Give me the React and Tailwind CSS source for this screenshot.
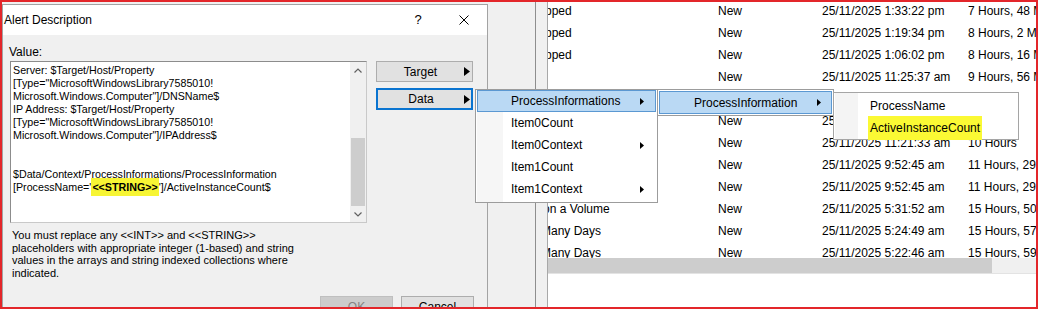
// App.jsx
// Alert Description dialog over an alert list, with a cascading data menu

import React from 'react';

const rows = [
    { name: 'Stopped', nameCls: '-ml-[21px]', date: '25/11/2025 1:33:22 pm', age: '7 Hours, 48 Minutes' },
    { name: 'Stopped', nameCls: '-ml-[21px]', date: '25/11/2025 1:19:34 pm', age: '8 Hours, 2 Minutes' },
    { name: 'Stopped', nameCls: '-ml-[21px]', date: '25/11/2025 1:06:02 pm', age: '8 Hours, 16 Minutes' },
    { name: '', nameCls: '', date: '25/11/2025 11:25:37 am', age: '9 Hours, 56 Minutes' },
    { name: '', nameCls: '', date: '25/11/2025 11:24:10 am', age: '10 Hours' },
    { name: '', nameCls: '', date: '25/11/2025 11:22:50 am', age: '10 Hours' },
    { name: '', nameCls: '', date: '25/11/2025 11:21:33 am', age: '10 Hours' },
    { name: '', nameCls: '', date: '25/11/2025 9:52:45 am', age: '11 Hours, 29 Minutes' },
    { name: '', nameCls: '', date: '25/11/2025 9:52:45 am', age: '11 Hours, 29 Minutes' },
    { name: 'on a Volume', nameCls: '-ml-[5px]', date: '25/11/2025 5:31:52 am', age: '15 Hours, 50 Minutes' },
    { name: 'Many Days', nameCls: '-ml-[7px]', date: '25/11/2025 5:24:49 am', age: '15 Hours, 57 Minutes' },
    { name: 'Many Days', nameCls: '-ml-[7px]', date: '25/11/2025 5:22:46 am', age: '15 Hours, 59 Minutes' },
];

const dataItems = [
    { label: 'ProcessInformations', sub: true, active: true },
    { label: 'Item0Count' },
    { label: 'Item0Context', sub: true },
    { label: 'Item1Count' },
    { label: 'Item1Context', sub: true },
];

const BigArrow = () => (
    <svg width="6" height="9" viewBox="0 0 6 9" className="shrink-0">
        <path d="M0 0L6 4.5L0 9Z" fill="#000" />
    </svg>
);

const SmallArrow = () => (
    <svg width="4" height="7" viewBox="0 0 4 7" className="shrink-0">
        <path d="M0 0L4 3.5L0 7Z" fill="#000" />
    </svg>
);

const Chevron = ({ up }) => (
    <svg width="8" height="5" viewBox="0 0 8 5">
        <polyline
            points={up ? '0.5,4.5 4,1 7.5,4.5' : '0.5,0.5 4,4 7.5,0.5'}
            fill="none"
            stroke="#606060"
            strokeWidth="1.2"
        />
    </svg>
);

const App = () => {
    return (
        <div className="relative w-[1038px] h-[309px] overflow-hidden border-2 border-[#e3262a] bg-[#f0f0f0] flex items-start font-['Liberation_Sans',Arial,sans-serif] text-[12px] text-black">
            {/* Dialog */}
            <div className="mt-[2px] w-[486px] shrink-0 border border-[#a3a3a3] bg-[#f0f0f0] flex flex-col">
                <div className="h-[30px] shrink-0 bg-white flex items-center pl-[1px]">
                    <span className="flex-1">Alert Description</span>
                    <span className="w-[20px] text-center text-[13px]">?</span>
                    <svg width="10" height="10" viewBox="0 0 10 10" className="ml-[31px] mr-[18px]">
                        <path d="M0.5 0.5L9.5 9.5M9.5 0.5L0.5 9.5" stroke="#000" strokeWidth="1" />
                    </svg>
                </div>

                <div className="shrink-0 flex pl-[6px] pt-[10px]">
                    <div className="w-[358px]">
                        <div className="h-[16px] leading-[14px]">Value:</div>
                        <div className="ml-[1px] w-[357px] h-[162px] border border-[#8c8c8c] border-b-[#c9c9c9] border-r-[#c9c9c9] bg-white flex">
                            <div className="flex-1 pl-[2px] pt-[2px] text-[10.7px] leading-[13px] whitespace-pre overflow-hidden">
                                <div>Server: $Target/Host/Property</div>
                                <div>[Type="MicrosoftWindowsLibrary7585010!</div>
                                <div>Microsoft.Windows.Computer"]/DNSName$</div>
                                <div>IP Address: $Target/Host/Property</div>
                                <div>[Type="MicrosoftWindowsLibrary7585010!</div>
                                <div>Microsoft.Windows.Computer"]/IPAddress$</div>
                                <div>&nbsp;</div>
                                <div>&nbsp;</div>
                                <div>$Data/Context/ProcessInformations/ProcessInformation</div>
                                <div>
                                    [ProcessName='<span className="bg-[#f7f534] py-[3px] px-[1px] font-bold">&lt;&lt;STRING&gt;&gt;</span>']/ActiveInstanceCount$
                                </div>
                            </div>
                            <div className="w-[16px] bg-[#f0f0f0] flex flex-col">
                                <div className="h-[17px] flex items-center justify-center">
                                    <Chevron up />
                                </div>
                                <div className="flex-1 flex flex-col justify-end">
                                    <div className="h-[68px] mx-[1px] bg-[#cdcdcd]"></div>
                                </div>
                                <div className="h-[16px] flex items-center justify-center">
                                    <Chevron />
                                </div>
                            </div>
                        </div>
                        <div className="ml-[3px] mt-[6px] text-[11px] leading-[12.5px]">
                            <div>You must replace any &lt;&lt;INT&gt;&gt; and &lt;&lt;STRING&gt;&gt;</div>
                            <div>placeholders with appropriate integer (1-based) and string</div>
                            <div>values in the arrays and string indexed collections where</div>
                            <div>indicated.</div>
                        </div>
                    </div>

                    <div className="ml-[9px] mt-[16px] flex flex-col gap-[6px]">
                        <button className="w-[97px] h-[21px] border border-[#adadad] bg-[#e1e1e1] flex items-center pr-[2px]">
                            <span className="flex-1 text-center">Target</span>
                            <BigArrow />
                        </button>
                        <button className="w-[97px] h-[22px] border-2 border-[#0a74d0] bg-[#e1e1e1] flex items-center pr-[1px]">
                            <span className="flex-1 text-center">Data</span>
                            <BigArrow />
                        </button>
                    </div>
                </div>

                <div className="shrink-0 mt-[17px] flex justify-end gap-[8px] pr-[13px]">
                    <button className="w-[73px] h-[22px] border border-[#bfbfbf] bg-[#cccccc] text-[#838383]">OK</button>
                    <button className="w-[73px] h-[22px] border border-[#adadad] bg-[#e1e1e1]">Cancel</button>
                </div>
            </div>

            {/* Background console panes */}
            <div className="w-[47px] h-full shrink-0 bg-[#f0f0f0]"></div>
            <div className="w-[1px] h-full shrink-0 bg-[#8e8e8e]"></div>
            <div className="w-[11px] h-full shrink-0 bg-[#f0f0f0]"></div>
            <div className="w-[1px] h-full shrink-0 bg-[#a8a8a8]"></div>

            {/* Alert list */}
            <div className="w-[488px] h-full shrink-0 bg-white flex flex-col">
                <div className="h-[256px] shrink-0 overflow-hidden">
                    <div className="-mt-[2px]">
                        {rows.map((r, i) => (
                            <div key={i} className="h-[22px] flex items-center whitespace-nowrap">
                                <div className="w-[170px] shrink-0 overflow-hidden">
                                    <span className={`block ${r.nameCls}`}>{r.name || '\u00a0'}</span>
                                </div>
                                <div className="w-[104px] shrink-0">New</div>
                                <div className="w-[146px] shrink-0">{r.date}</div>
                                <div className="flex-1 overflow-hidden">{r.age}</div>
                            </div>
                        ))}
                    </div>
                </div>
                <div className="h-[15px] shrink-0 flex bg-[#f0f0f0]">
                    <div className="w-[444px] bg-[#cdcdcd]"></div>
                </div>
                <div className="flex-1 border-t border-[#e3e3e3] bg-white"></div>
            </div>

            {/* Data submenu */}
            <div className="absolute left-[473px] top-[87px] w-[183px] h-[114px] border border-[#9c9c9c] bg-white px-[1px]">
                <div className="absolute left-[1px] top-0 bottom-0 w-[26px] bg-[#f6f6f6]"></div>
                {dataItems.map((it) => (
                    <div
                        key={it.label}
                        className={`relative h-[22px] flex items-center pl-[33px] pr-[11px] border ${it.active ? 'bg-[#bad9f4] border-[#5b98d2]' : 'border-transparent'}`}
                    >
                        <span className="flex-1">{it.label}</span>
                        {it.sub && <SmallArrow />}
                    </div>
                ))}
            </div>

            {/* ProcessInformations submenu */}
            <div className="absolute left-[655px] top-[87px] w-[177px] h-[27px] border border-[#9c9c9c] bg-white p-[1px]">
                <div className="h-[23px] flex items-center pl-[34px] pr-[10px] border border-[#5b98d2] bg-[#bad9f4]">
                    <span className="flex-1">ProcessInformation</span>
                    <SmallArrow />
                </div>
            </div>

            {/* ProcessInformation submenu */}
            <div className="absolute left-[831px] top-[90px] w-[186px] h-[48px] border border-[#a5a5a5] bg-white pt-[2px]">
                <div className="absolute left-[1px] top-0 bottom-0 w-[23px] bg-[#f4f4f4]"></div>
                <div className="relative h-[22px] flex items-center pl-[36px]">ProcessName</div>
                <div className="relative h-[22px] flex items-center pl-[34px]">
                    <span className="bg-[#fbf934] px-[2px] py-[3px]">ActiveInstanceCount</span>
                </div>
            </div>
        </div>
    );
};

export default App;
